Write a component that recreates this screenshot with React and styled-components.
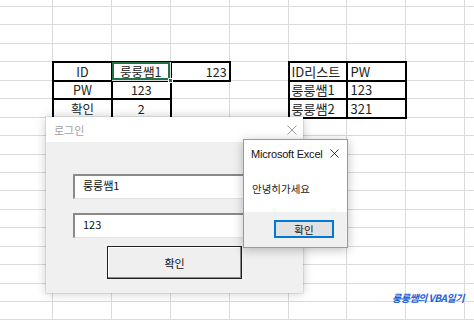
import React from "react"
import styled, { createGlobalStyle } from "styled-components"

const GlobalStyle = createGlobalStyle`
  html, body { margin: 0; padding: 0; background: #fff; }
  body { width: 474px; height: 320px; overflow: hidden; }
`

const KR = `"Noto Sans CJK KR", "Noto Sans", sans-serif`

const Screen = styled.div`
  position: relative;
  width: 474px;
  height: 320px;
  overflow: hidden;
  background: #fff;
  font-family: ${KR};
`

const Sheet = styled.div`
  display: grid;
  grid-template-columns: 53px repeat(8, 58.9px);
  grid-template-rows: 7px repeat(17, 18.45px);
`

const Cell = styled.div`
  position: relative;
  box-sizing: border-box;
  border-right: 1px solid #dadada;
  border-bottom: 1px solid #dadada;
  display: flex;
  align-items: center;
  justify-content: ${p => p.$align === "right" ? "flex-end" : p.$align === "left" ? "flex-start" : "center"};
  padding: 0 3px;
  font-size: ${p => p.$size || 12.5}px;
  color: #222;
  white-space: nowrap;
  overflow: visible;
  ${p => p.$box && `
    border: none;
    box-shadow: inset 0 0 0 1px #000;
    outline: 1px solid #000;
    z-index: 1;
  `}
  ${p => p.$selected && `
    box-shadow: inset 0 0 0 2px #217346;
    outline: 1px solid #000;
    z-index: 2;
    &::after {
      content: "";
      position: absolute;
      right: -3px;
      bottom: -3px;
      width: 5px;
      height: 5px;
      background: #217346;
      border: 1px solid #fff;
      box-sizing: border-box;
    }
  `}
`

const Window = styled.div`
  position: absolute;
  left: ${p => p.$x}px;
  top: ${p => p.$y}px;
  width: ${p => p.$w}px;
  height: ${p => p.$h}px;
  box-sizing: border-box;
  display: flex;
  flex-direction: column;
  background: #f0f0f0;
  z-index: ${p => p.$z};
`

const LoginWindow = styled(Window)`
  box-shadow: 0 0 10px rgba(0, 0, 0, 0.22), 0 0 0 1px rgba(0, 0, 0, 0.08);
`

const MsgWindow = styled(Window)`
  border: 1px solid #9a9a9a;
  box-shadow: 0 2px 10px rgba(0, 0, 0, 0.25);
`

const TitleBar = styled.div`
  height: ${p => p.$h}px;
  flex: none;
  background: #fff;
  display: flex;
  align-items: center;
  justify-content: space-between;
  white-space: nowrap;
  padding: 0 ${p => p.$pr}px 0 ${p => p.$pl}px;
  font-size: ${p => p.$size}px;
  color: ${p => p.$color};
  font-family: ${p => p.$latin ? `"Liberation Sans", ${KR}` : KR};
  letter-spacing: ${p => p.$latin ? "-0.2px" : "0"};
`

const CloseIcon = ({ color, size }) => (
  <svg width={size} height={size} viewBox="0 0 10 10">
    <path d="M0.5 0.5 L9.5 9.5 M9.5 0.5 L0.5 9.5" stroke={color} strokeWidth="1" fill="none" />
  </svg>
)

const LoginBody = styled.div`
  flex: 1;
  display: flex;
  flex-direction: column;
  padding: 32px 0 0 27px;
`

const TextBox = styled.div`
  box-sizing: border-box;
  width: 214px;
  height: 25px;
  margin-bottom: ${p => p.$mb}px;
  background: #fff;
  border-top: 2px solid #8a8a8a;
  border-left: 2px solid #8a8a8a;
  border-right: 1px solid #e3e3e3;
  border-bottom: 1px solid #e3e3e3;
  padding: 2px 0 0 8px;
  font-size: 11px;
  line-height: 14px;
  color: #111;
`

const PushButton = styled.div`
  box-sizing: border-box;
  margin-left: 34px;
  width: 135px;
  height: 33px;
  background: #efefef;
  border: 1px solid #222;
  box-shadow: inset -1px -1px 0 #888, inset 1px 1px 0 #fff;
  display: flex;
  align-items: center;
  justify-content: center;
  font-size: 11px;
  color: #111;
`

const MsgBody = styled.div`
  height: 45px;
  background: #fff;
  padding: 0 0 2px 8px;
  box-sizing: border-box;
  font-size: 10.5px;
  color: #222;
  display: flex;
  align-items: center;
`

const MsgFooter = styled.div`
  flex: 1;
  display: flex;
  justify-content: flex-end;
  align-items: flex-start;
  padding: 8px 13px 0 0;
`

const OkButton = styled.div`
  box-sizing: border-box;
  width: 60px;
  height: 18px;
  background: #e1e1e1;
  border: 2px solid #0078d7;
  display: flex;
  align-items: center;
  justify-content: center;
  font-size: 10.5px;
  color: #111;
`

const Watermark = styled.div`
  position: absolute;
  left: 392px;
  top: 290px;
  font-size: 10px;
  font-weight: 700;
  font-style: italic;
  color: #1e63d6;
  letter-spacing: -0.5px;
  z-index: 1;
`

const cells = {
  "4-1": { text: "ID", box: true },
  "4-2": { text: "룽룽쌤1", selected: true },
  "4-3": { text: "123", box: true, align: "right" },
  "5-1": { text: "PW", box: true },
  "5-2": { text: "123", box: true },
  "6-1": { text: "확인", box: true },
  "6-2": { text: "2", box: true },
  "4-5": { text: "ID리스트", box: true, align: "left", size: 13 },
  "4-6": { text: "PW", box: true, align: "left", size: 13 },
  "5-5": { text: "룽룽쌤1", box: true, align: "left", size: 13 },
  "5-6": { text: "123", box: true, align: "left", size: 13 },
  "6-5": { text: "룽룽쌤2", box: true, align: "left", size: 13 },
  "6-6": { text: "321", box: true, align: "left", size: 13 },
}

const rows = Array.from({ length: 18 }, (_, r) => r)
const cols = Array.from({ length: 9 }, (_, c) => c)

export default function App() {
  return (
    <Screen>
      <GlobalStyle />
      <Sheet>
        {rows.map(r => cols.map(c => {
          const d = cells[`${r}-${c}`]
          return (
            <Cell key={`${r}-${c}`} $box={d && d.box} $selected={d && d.selected} $align={d && d.align} $size={d && d.size}>
              {d ? d.text : null}
            </Cell>
          )
        }))}
      </Sheet>

      <LoginWindow $x={46} $y={117} $w={257} $h={176} $z={5}>
        <TitleBar $h={25} $pl={8} $pr={6} $size={11} $color="#a0a0a0">
          <span>로그인</span>
          <CloseIcon color="#a0a0a0" size={10} />
        </TitleBar>
        <LoginBody>
          <TextBox $mb={14}>룽룽쌤1</TextBox>
          <TextBox $mb={8}>123</TextBox>
          <PushButton>확인</PushButton>
        </LoginBody>
      </LoginWindow>

      <MsgWindow $x={243} $y={139} $w={105} $h={109} $z={6}>
        <TitleBar $h={27} $pl={7} $pr={8} $size={11} $color="#111" $latin>
          <span>Microsoft Excel</span>
          <CloseIcon color="#222" size={9} />
        </TitleBar>
        <MsgBody>안녕히가세요</MsgBody>
        <MsgFooter>
          <OkButton>확인</OkButton>
        </MsgFooter>
      </MsgWindow>

      <Watermark>룽룽쌤의 VBA일기</Watermark>
    </Screen>
  )
}
